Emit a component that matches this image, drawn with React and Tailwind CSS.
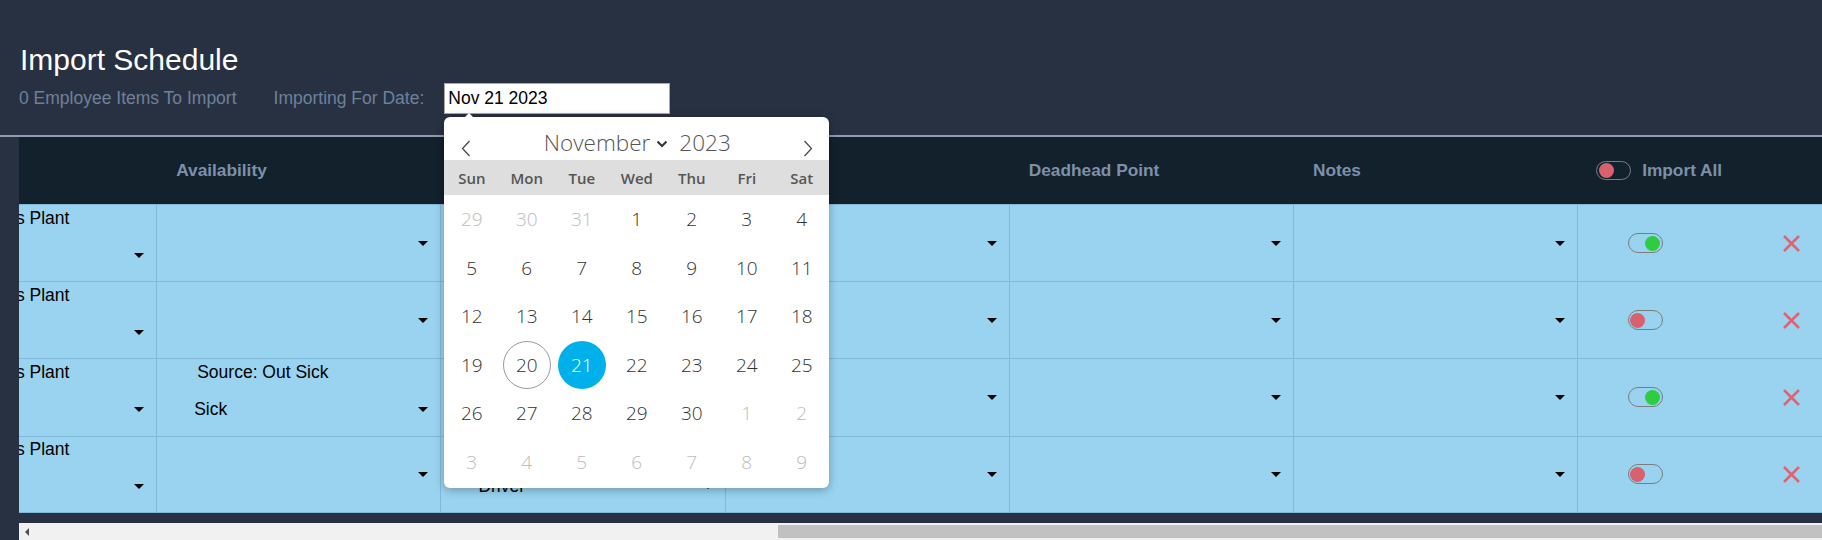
import React from 'react';

// hidden header texts (under the picker or scrolled off) are left blank
const columns = ['', 'Availability', '', '', 'Deadhead Point', 'Notes'];

const rows = [
  { plant: 'Sunset Springs Plant', avail: null, position: null, on: true },
  { plant: 'Sunset Springs Plant', avail: null, position: null, on: false },
  { plant: 'Sunset Springs Plant', avail: { label: 'Source: Out Sick', value: 'Sick' }, position: null, on: true },
  { plant: 'Sunset Springs Plant', avail: null, position: { label: ' ', value: 'Driver' }, on: false },
];

const weeks = [
  [[29, 0], [30, 0], [31, 0], [1, 1], [2, 1], [3, 1], [4, 1]],
  [[5, 1], [6, 1], [7, 1], [8, 1], [9, 1], [10, 1], [11, 1]],
  [[12, 1], [13, 1], [14, 1], [15, 1], [16, 1], [17, 1], [18, 1]],
  [[19, 1], [20, 1], [21, 1], [22, 1], [23, 1], [24, 1], [25, 1]],
  [[26, 1], [27, 1], [28, 1], [29, 1], [30, 1], [1, 0], [2, 0]],
  [[3, 0], [4, 0], [5, 0], [6, 0], [7, 0], [8, 0], [9, 0]],
];

function Arrow() {
  return <span className="w-0 h-0 border-x-[5px] border-t-[5px] border-x-transparent border-t-black" />;
}

function SelectCell({ label, value, labelPad = 'pl-[40px]', first }) {
  return (
    <div className={`w-[284.2px] shrink-0 flex flex-col justify-center ${first ? '' : 'border-l border-[#80b8d9]'}`}>
      {label && <div className={`h-[20px] leading-[20px] mb-[4px] whitespace-pre ${labelPad}`}>{label}</div>}
      <div className="h-[46px] ml-[37px] mr-[12px] flex items-center justify-between">
        <span>{value}</span>
        <Arrow />
      </div>
    </div>
  );
}

function Toggle({ on, header }) {
  return (
    <div
      className={`flex items-center w-[35px] rounded-full border border-[#7c7c7c] ${
        header ? 'h-[19px] bg-[#13212c] pl-[2px]' : 'h-[20px] px-[1px]'
      } ${on ? 'justify-end pr-[2px]' : 'justify-start'}`}
    >
      <div className={`w-[15px] h-[15px] rounded-full ${on ? 'bg-[#2ecc40]' : 'bg-[#d9606d]'}`} />
    </div>
  );
}

function Chevron({ dir }) {
  return (
    <svg width="10" height="17" viewBox="0 0 10 17" className="mt-[9px]">
      <polyline
        points={dir === 'left' ? '8.5,1 1.5,8.5 8.5,16' : '1.5,1 8.5,8.5 1.5,16'}
        fill="none"
        stroke="#444"
        strokeWidth="1.2"
      />
    </svg>
  );
}

function DatePicker() {
  return (
    <div className="absolute left-0 top-[34px] z-10 w-[385px] h-[371px] bg-white rounded-[6px] shadow-[0_2px_10px_rgba(0,0,0,0.3)] font-['Segoe_UI','Open_Sans',sans-serif]">
      <span className="absolute -top-[4px] left-[21px] w-0 h-0 border-x-[4px] border-b-[4px] border-x-transparent border-b-white" />
      <div className="h-[43px] flex items-center pt-[10px] pl-[17px] pr-[16px]">
        <Chevron dir="left" />
        <div className="flex-1 flex items-center justify-center text-[#555] text-[22.5px] font-light leading-none">
          <span>November</span>
          <svg width="12" height="8" viewBox="0 0 12 8" className="ml-[6px] mr-[11px]">
            <polyline points="1.5,1.5 6,6 10.5,1.5" fill="none" stroke="#333" strokeWidth="2" />
          </svg>
          <span>2023</span>
        </div>
        <Chevron dir="right" />
      </div>
      <div className="h-[35px] bg-[#dedede] grid grid-cols-7 items-center pt-[2px] text-[15px] font-semibold text-[#555]">
        {['Sun', 'Mon', 'Tue', 'Wed', 'Thu', 'Fri', 'Sat'].map((d) => (
          <div key={d} className="text-center">{d}</div>
        ))}
      </div>
      {weeks.map((week, i) => (
        <div key={i} className="h-[48.6px] grid grid-cols-7">
          {week.map(([d, cur]) => {
            const selected = cur && d === 21;
            const today = cur && d === 20;
            return (
              <div key={d} className="flex items-center justify-center">
                <div
                  className={`w-[48px] h-[48px] rounded-full flex items-center justify-center text-[19px] font-light ${
                    selected
                      ? 'bg-[#00b0ea] text-white'
                      : today
                      ? 'border border-[#9a9a9a] text-[#333]'
                      : cur
                      ? 'text-[#333]'
                      : 'text-[#bdbdbd]'
                  }`}
                >
                  {d}
                </div>
              </div>
            );
          })}
        </div>
      ))}
    </div>
  );
}

export default function App() {
  return (
    <div className="w-[1822px] h-[540px] overflow-hidden bg-[#283142] font-['Liberation_Sans',Arial,sans-serif] text-[17.5px]">
      {/* Page header */}
      <div className="h-[137px] px-[19px] pt-[45px] border-b-2 border-[#8e9bb1]">
        <h1 className="text-[30px] leading-[30px] text-white pl-[1px]">Import Schedule</h1>
        <div className="mt-[8px] h-[31px] flex items-center text-[#6d819c]">
          <span>0 Employee Items To Import</span>
          <span className="ml-[37px]">Importing For Date:</span>
          <div className="relative ml-[20px]">
            <div className="w-[226px] h-[31px] bg-white border border-[#a9a9a9] flex items-center pl-[3px] text-black">
              Nov 21 2023
            </div>
            <DatePicker />
          </div>
        </div>
      </div>

      {/* Table */}
      <div className="ml-[19px] h-[386px] overflow-hidden">
        <div className="w-[1990px] ml-[-147px]">
          <div className="h-[67px] flex bg-[#13212c] font-bold text-[#7d90a9] text-[17.3px]">
            {columns.map((c, i) => (
              <div key={i} className="w-[284.2px] shrink-0 flex items-center pl-[20px] whitespace-nowrap">
                {c}
              </div>
            ))}
            <div className="w-[284.2px] shrink-0 flex items-center pl-[19px] gap-[11px]">
              <Toggle header on={false} />
              <span>Import All</span>
            </div>
          </div>
          {rows.map((r, i) => (
            <div
              key={i}
              className={`h-[77.2px] flex bg-[#9ad3f0] border-t border-[#80b8d9] text-black ${i === rows.length - 1 ? 'border-b' : ''}`}
            >
              <SelectCell first label={r.plant} value="" labelPad="pl-[34px]" />
              <SelectCell label={r.avail?.label} value={r.avail?.value} />
              <SelectCell label={r.position?.label} value={r.position?.value} />
              <SelectCell />
              <SelectCell />
              <SelectCell />
              <div className="w-[284.2px] shrink-0 border-l border-[#80b8d9] flex items-center">
                <div className="ml-[50px]">
                  <Toggle on={r.on} />
                </div>
                <svg width="17" height="17" viewBox="0 0 17 17" className="ml-[120px]">
                  <line x1="1" y1="1" x2="16" y2="16" stroke="#e0626f" strokeWidth="2.5" />
                  <line x1="16" y1="1" x2="1" y2="16" stroke="#e0626f" strokeWidth="2.5" />
                </svg>
              </div>
            </div>
          ))}
        </div>
      </div>

      {/* Horizontal scrollbar */}
      <div className="ml-[19px] h-[17px] bg-[#f1f1f1] flex items-center">
        <span className="ml-[6px] w-0 h-0 border-y-[4px] border-r-[4px] border-y-transparent border-r-[#505050]" />
        <div className="ml-[749px] flex-1 h-[13px] bg-[#c1c1c1]" />
      </div>
    </div>
  );
}
